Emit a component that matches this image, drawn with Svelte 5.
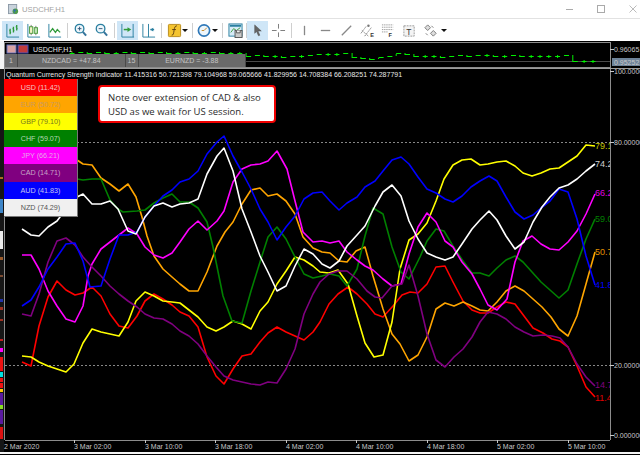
<script lang="ts">
	const stepX = 8.83;

	const series = [
		{
			name: 'USD',
			color: '#ff0000',
			points:
				'22,363 31,367 39,327 48,298 57,282 66,291 75,296 83,294 92,288 101,297 110,315 119,327 128,329 137,317 145,302 154,295 163,300 172,306 180,313 189,317 198,328 207,358 216,377 224,385 233,370 242,357 251,355 260,343 268,334 277,328 286,333 295,337 304,341 313,333 320,323 329,305 338,295 348,288 357,295 367,305 375,315 383,318 393,307 402,296 410,293 418,294 427,285 436,268 445,267 453,283 463,302 472,311 480,314 488,314 497,308 506,303 515,305 524,317 533,329 543,334 552,340 560,342 568,348 577,367 586,388 595,398'
		},
		{
			name: 'EUR',
			color: '#ffa500',
			points:
				'70,158 77,161 83,165 92,166 101,179 110,185 119,192 128,185 136,198 142,218 147,237 154,257 163,270 172,278 180,285 189,292 198,292 207,273 217,247 225,233 233,223 242,205 251,191 260,189 268,197 277,195 286,202 295,215 303,238 313,249 322,253 330,254 339,262 347,263 356,252 365,248 373,277 383,310 392,335 400,345 409,362 418,356 427,338 436,310 445,304 454,307 463,303 472,307 480,311 488,312 497,303 506,292 515,287 524,292 533,300 542,308 551,318 559,330 568,337 577,317 586,285 595,253'
		},
		{
			name: 'GBP',
			color: '#ffff00',
			points:
				'22,357 31,358 39,363 48,367 57,370 66,373 74,365 83,344 92,330 101,333 110,335 119,337 128,323 136,302 145,293 154,297 163,302 172,303 180,304 189,311 198,318 207,328 216,332 224,328 233,322 242,325 251,330 260,312 268,303 277,285 286,272 295,258 304,261 313,267 320,273 329,274 338,271 348,285 357,317 365,344 374,358 383,356 392,323 400,270 409,241 418,235 427,224 436,202 444,180 453,166 462,161 471,160 480,166 488,165 497,163 506,162 515,167 523,174 532,177 541,174 550,170 559,169 568,163 577,157 586,146 595,147'
		},
		{
			name: 'CHF',
			color: '#008000',
			points:
				'70,179 77,180 83,181 92,180 101,180 110,201 118,210 123,213 137,212 145,211 154,204 163,199 172,195 180,203 189,203 198,209 207,223 213,248 223,297 232,322 242,324 251,292 260,263 268,238 277,228 286,240 295,258 304,275 313,279 322,277 330,275 339,277 347,287 357,270 365,237 373,209 383,215 392,248 401,273 409,280 420,258 427,242 436,230 444,232 453,247 463,262 472,274 480,274 489,277 497,269 506,261 515,257 523,263 532,273 541,283 550,291 559,299 568,291 577,265 586,240 595,220'
		},
		{
			name: 'JPY',
			color: '#ff00ff',
			points:
				'22,256 31,256 39,270 48,292 57,307 66,320 75,323 83,307 88,277 92,265 101,250 110,243 119,236 128,229 137,235 145,248 154,256 163,259 172,254 180,243 189,230 198,222 207,231 217,222 224,212 233,183 242,170 251,166 260,165 268,162 277,152 287,170 295,202 303,233 313,243 322,242 330,244 339,242 347,253 357,261 365,267 373,271 383,280 392,287 401,285 409,255 418,228 427,214 436,223 445,242 453,248 462,263 472,275 480,290 488,306 497,311 507,300 515,263 523,242 532,237 541,245 550,250 559,251 568,243 577,232 586,215 595,195'
		},
		{
			name: 'CAD',
			color: '#800080',
			points:
				'22,315 31,317 39,295 48,263 57,242 66,239 75,246 83,258 92,268 101,277 110,287 119,295 128,302 137,308 145,315 154,319 163,320 172,325 180,332 189,337 198,345 207,357 216,368 224,377 233,381 242,383 251,385 260,386 268,383 277,384 286,370 295,350 304,315 313,295 320,283 329,275 338,272 347,272 357,280 367,292 375,298 382,299 392,287 402,285 409,266 418,297 427,335 436,361 445,368 454,358 463,350 472,338 480,323 488,313 497,315 506,320 515,328 524,333 533,337 543,336 552,337 560,339 568,348 577,365 586,378 595,387'
		},
		{
			name: 'AUD',
			color: '#0000ff',
			points:
				'22,307 31,301 39,288 48,270 57,258 66,245 75,244 83,262 90,288 101,287 110,260 119,236 128,236 137,233 145,218 154,207 163,197 172,191 180,183 189,180 198,172 207,155 217,143 224,137 233,157 242,173 251,190 260,210 268,223 277,241 286,228 295,217 304,200 313,194 322,193 330,202 339,211 347,204 357,198 365,188 375,182 383,172 392,161 401,158 409,165 418,178 427,190 436,194 445,200 453,203 462,197 471,188 480,182 489,177 497,182 506,198 515,213 524,220 533,216 541,209 550,202 559,190 568,193 577,220 586,257 595,286'
		},
		{
			name: 'NZD',
			color: '#ffffff',
			points:
				'22,230 31,236 39,237 48,228 57,222 66,210 77,198 83,195 92,205 101,205 110,202 118,210 128,232 136,235 145,218 154,207 163,204 172,208 180,205 189,204 198,200 207,175 217,157 224,149 233,172 242,210 251,233 260,257 268,273 277,292 286,287 295,267 304,250 313,255 322,265 330,269 339,262 347,247 357,236 365,227 375,207 383,193 392,186 401,197 409,222 418,240 427,254 436,258 445,261 453,258 462,245 472,230 480,221 489,212 497,221 506,237 515,250 524,243 533,223 542,208 550,198 559,189 568,186 577,180 586,172 595,165'
		}
	];

	const legend = [
		{ label: 'USD (11.42)', bg: '#ff0000', fg: '#f2c4c4' },
		{ label: 'EUR (50.72)', bg: '#ffa500', fg: '#c99a62' },
		{ label: 'GBP (79.10)', bg: '#ffff00', fg: '#77771f' },
		{ label: 'CHF (59.07)', bg: '#008000', fg: '#b5d6b5' },
		{ label: 'JPY (66.21)', bg: '#ff00ff', fg: '#e8a8e8' },
		{ label: 'CAD (14.71)', bg: '#800080', fg: '#c7a3c7' },
		{ label: 'AUD (41.83)', bg: '#0000ff', fg: '#c4c4f2' },
		{ label: 'NZD (74.29)', bg: '#f0f0f0', fg: '#555555' }
	];

	const endLabels = [
		{ text: '79.10', y: 150, color: '#c4c400' },
		{ text: '74.29', y: 168, color: '#cfcfcf' },
		{ text: '66.21', y: 197, color: '#e000e0' },
		{ text: '59.07', y: 223, color: '#008000' },
		{ text: '50.72', y: 256, color: '#e09000' },
		{ text: '41.83', y: 289, color: '#0000ff' },
		{ text: '14.71', y: 389, color: '#800080' },
		{ text: '11.42', y: 402, color: '#e00000' }
	];

	const dates = [
		{ text: '2 Mar 2020', x: 4 },
		{ text: '3 Mar 02:00', x: 74 },
		{ text: '3 Mar 10:00', x: 145 },
		{ text: '3 Mar 18:00', x: 215 },
		{ text: '4 Mar 02:00', x: 286 },
		{ text: '4 Mar 10:00', x: 356 },
		{ text: '4 Mar 18:00', x: 427 },
		{ text: '5 Mar 02:00', x: 497 },
		{ text: '5 Mar 10:00', x: 568 }
	];

	const scale = [
		{ text: '100.0000', y: 75 },
		{ text: '80.00000', y: 146 },
		{ text: '20.00000', y: 369 },
		{ text: '0.000000', y: 439 }
	];

	// leftovers of the window behind the chart, along the left edge
	const strip = [
		[178, 2, '#b06a20'], [200, 14, '#3f86c8'], [232, 18, '#ededed'], [258, 3, '#9a5a2a'],
		[276, 2, '#7a4a30'], [300, 3, '#2233aa'], [308, 3, '#a03020'], [320, 2, '#a03020'],
		[340, 2, '#c02020'], [349, 4, '#ff00ff'], [358, 14, '#ee1111'], [373, 5, '#00e0e0'],
		[379, 4, '#ee1111'], [384, 5, '#ee1111'], [390, 3, '#ffcc00'], [394, 12, '#5a1aa0'],
		[406, 4, '#88dd22'], [411, 14, '#5a1aa0'], [428, 12, '#dd1111']
	];

	// mini price chart in the top panel
	const miniY = [
		54, 53, 54, 53, 54, 54, 53, 54, 53, 54, 53, 54, 54, 53, 54, 54, 53, 54, 54, 54, 57, 56, 57, 57,
		58, 57, 57, 56, 55, 55, 55, 54, 58, 59, 60, 58, 57, 54, 55, 57, 57, 57, 58, 57, 56, 57, 56, 56,
		57, 57, 56, 57, 57, 57, 57, 57, 56, 62, 62, 62
	];
	let miniPath = '';
	miniY.forEach((y, i) => {
		const x = 72 + i * stepX;
		miniPath += `M${(x - 2.5).toFixed(1)} ${y + 0.5} H${(x + 2.5).toFixed(1)} `;
		if (i && miniY[i - 1] !== y) miniPath += `M${(x - 2.5).toFixed(1)} ${miniY[i - 1]} V${y + 1} `;
		else miniPath += `M${x.toFixed(1)} ${y - 1} V${y + 2} `;
	});
</script>

<div class="window">
	<header class="titlebar">
		<svg class="appicon" viewBox="0 0 12 12" width="11" height="11">
			<rect x="0.5" y="0.5" width="9" height="10" fill="#c9d3dc" stroke="#8a98a5" />
			<circle cx="8" cy="8" r="3" fill="#4f9a4a" />
			<path d="M6 7h3M7 5.5v4" stroke="#2f6fb0" />
		</svg>
		<span class="title">USDCHF,H1</span>
		<div class="winbtns">
			<span class="minimize"></span>
			<span class="maximize"></span>
			<svg viewBox="0 0 8 8" width="8" height="8"><path d="M0.5 0.5l7 7M7.5 0.5l-7 7" stroke="#bbb" /></svg>
		</div>
	</header>

	<nav class="toolbar">
		<button class="on">
			<svg viewBox="0 0 16 16"><path d="M2 1v14h13" stroke="#2a7fa0" fill="none" /><path d="M5.500 6v6M4.500 8h1M5.500 10h1M9 4v6M8 6h1M9 8h1M12.500 2v6M11.500 4h1M12.500 6h1" stroke="#2f9a3a" stroke-width="1.400" fill="none" /></svg>
		</button>
		<button>
			<svg viewBox="0 0 16 16"><path d="M2 1v14h13" stroke="#2a7fa0" fill="none" /><path d="M5.500 2v11M10.500 3v10" stroke="#777" /><rect x="3.800" y="4" width="3.400" height="7" fill="#f6f3c9" stroke="#4a9a3a" /><rect x="8.800" y="5" width="3.400" height="6" fill="#bfe3b8" stroke="#4a9a3a" /></svg>
		</button>
		<button>
			<svg viewBox="0 0 16 16"><path d="M2 1v14h13" stroke="#2a7fa0" fill="none" /><path d="M3 10l3-4 3 4 2-3 3 3" stroke="#2f9a3a" stroke-width="1.300" fill="none" /></svg>
		</button>
		<i class="sep"></i>
		<button>
			<svg viewBox="0 0 16 16"><circle cx="7" cy="6" r="4.600" fill="#eef6fb" stroke="#2a7fa0" stroke-width="1.400" /><path d="M5 6h4M7 4v4" stroke="#33557a" /><path d="M10.500 9.500l3.500 4" stroke="#36759c" stroke-width="2.200" /></svg>
		</button>
		<button>
			<svg viewBox="0 0 16 16"><circle cx="7" cy="6" r="4.600" fill="#eef6fb" stroke="#2a7fa0" stroke-width="1.400" /><path d="M5 6h4" stroke="#33557a" /><path d="M10.500 9.500l3.500 4" stroke="#36759c" stroke-width="2.200" /></svg>
		</button>
		<i class="sep"></i>
		<button class="on">
			<svg viewBox="0 0 16 16"><path d="M2 1v14h13M14 1v14" stroke="#2a7fa0" fill="none" /><path d="M4 7h5" stroke="#2f9a3a" stroke-width="1.600" /><path d="M8 4.500l4 2.500-4 2.500z" fill="#2f9a3a" /></svg>
		</button>
		<button>
			<svg viewBox="0 0 16 16"><path d="M2 1v14h13M8 1v14" stroke="#2a7fa0" fill="none" /><path d="M10 7h4" stroke="#2a7fa0" stroke-width="1.600" /><path d="M13 5v4l-3-2z" fill="#2a7fa0" /></svg>
		</button>
		<i class="sep"></i>
		<button class="wide">
			<svg viewBox="0 0 16 16"><rect x="1.500" y="1.500" width="13" height="13" rx="1" fill="#f4c430" stroke="#b98a1a" /><path d="M5 13c2 0 2-2 2.500-5S8.500 3 10.500 3M5.500 7h4" stroke="#5a3c10" fill="none" /></svg>
			<b class="caret"></b>
		</button>
		<i class="sep narrow"></i>
		<button class="wide">
			<svg viewBox="0 0 16 16"><circle cx="7.500" cy="8" r="6" fill="#eef6fb" stroke="#2f78b8" stroke-width="1.800" /><path d="M7.500 8l3-3M7.500 8H5" stroke="#c4882a" /></svg>
			<b class="caret"></b>
		</button>
		<i class="sep"></i>
		<button>
			<svg viewBox="0 0 16 16"><rect x="1" y="1" width="14" height="13" fill="#d7ecf8" stroke="#2a7fa0" /><path d="M2 2h12v2H2z" fill="#2a7fa0" /><path d="M3 10l3-4 3 2 4-3" stroke="#3f9a3a" fill="none" /><rect x="7.500" y="8" width="7.500" height="7.500" fill="#c9c9c9" stroke="#555" /><path d="M9 8v2.500h4V8" stroke="#555" fill="#eee" /></svg>
		</button>
		<i class="sep tight"></i>
		<button class="on">
			<svg viewBox="0 0 16 16"><path d="M5 2l7 6.500H8.500l2 4.500-1.500.6-2-4.500L5 11z" fill="#666" stroke="#444" stroke-width="0.500" /></svg>
		</button>
		<button>
			<svg viewBox="0 0 16 16"><path d="M8 1v5M8 10v5M1 8h5M10 8h5" stroke="#777" /></svg>
		</button>
		<i class="sep"></i>
		<button>
			<svg viewBox="0 0 16 16"><path d="M8 3v10" stroke="#888" stroke-width="1.400" /></svg>
		</button>
		<button>
			<svg viewBox="0 0 16 16"><path d="M3 8h10" stroke="#888" stroke-width="1.400" /></svg>
		</button>
		<button>
			<svg viewBox="0 0 16 16"><path d="M3 13L13 3" stroke="#888" stroke-width="1.400" /></svg>
		</button>
		<button>
			<svg viewBox="0 0 16 16"><path d="M1 11l6-8M5 14l7-9M2 8l7 6" stroke="#777" stroke-dasharray="1.500 1" /><circle cx="9" cy="3" r="1.300" fill="#777" /><text x="11" y="15" class="glyph">E</text></svg>
		</button>
		<button>
			<svg viewBox="0 0 16 16"><path d="M1 2h12M1 4.500h12M1 7h12M1 9.500h6" stroke="#999" stroke-dasharray="1.500 0.800" /><text x="8" y="15" class="glyph">F</text></svg>
		</button>
		<button>
			<svg viewBox="0 0 16 16"><rect x="2" y="3" width="11" height="11" fill="#f4f4f4" stroke="#999" stroke-dasharray="2 1" /><text x="4.500" y="12.500" class="glyph big">T</text></svg>
		</button>
		<button>
			<svg viewBox="0 0 16 16"><path d="M2 5l3-3 3 3-3 3zM8 11l3-3 3 3-3 3zM9 3l2 2M3 11l2 2" stroke="#777" fill="#ddd" /></svg>
		</button>
		<b class="caret lone"></b>
	</nav>

	<main class="terminal">
		<svg class="chart" viewBox="0 42 640 413" width="640" height="413">
			<defs>
				<clipPath id="plot"><rect x="5" y="70" width="605" height="371" /></clipPath>
			</defs>

			<rect x="0" y="42" width="4" height="28" fill="#f4f4f4" />
			<rect x="0" y="70" width="4" height="385" fill="#161616" />
			{#each strip as [y, h, fill]}
				<rect x="0" {y} width="3" height={h} {fill} />
			{/each}

			<!-- top panel -->
			<path d="M4 43.500H610M4.500 43V441M610.500 43V441M5 68.500H610M5 441.500H610" stroke="#8c8c8c" fill="none" />
			<path d="M5 69.500H640" stroke="#9c9c9c" />
			<rect x="7" y="46" width="9" height="8" fill="#d9a3a3" stroke="#6a76c0" />
			<rect x="18" y="46" width="10" height="8" fill="#c03a3a" stroke="#3a4fc0" />
			<text x="33" y="53" class="small white">USDCHF,H1</text>
			<path d="M5 62.500H610" stroke="#4a4a4a" />
			<path d={miniPath} stroke="#00f000" fill="none" />

			<path d="M610 50.500h4" stroke="#c8c8c8" />
			<text x="614" y="53" class="small">0.96065</text>
			<rect x="612" y="59" width="28" height="8" fill="#6d8298" />
			<text x="614" y="65.500" class="small">0.95252</text>

			<!-- indicator panel -->
			<text x="6" y="77.500" class="small white">Quantum Currency Strength Indicator 11.415316 50.721398 79.104968 59.065666 41.829956 14.708384 66.208251 74.287791</text>
			<path d="M5 143.500H610M5 366.500H610" stroke="#aaa" stroke-width="0.800" stroke-dasharray="2 2" />

			<g clip-path="url(#plot)">
				{#each series as line}
					<polyline points={line.points} stroke={line.color} class="curve" />
				{/each}
				{#each endLabels as end}
					<text x="595" y={end.y} fill={end.color} class="endlabel">{end.text}</text>
				{/each}
			</g>

			{#each scale as tick}
				<path d="M610 {tick.y - 2.500}h4" stroke="#c8c8c8" />
				<text x="614" y={tick.y} class="small">{tick.text}</text>
			{/each}

			{#each dates as d, i}
				{#if i}<path d="M{d.x + 0.500} 441v3" stroke="#c8c8c8" />{/if}
				<text x={d.x} y="450" class="small">{d.text}</text>
			{/each}

			<rect x="0" y="453" width="640" height="2" fill="#f4f4f4" />
		</svg>

		<div class="spread">
			<span class="cell num">1</span>
			<span class="cell pair">NZDCAD = +47.84</span>
			<span class="cell num">15</span>
			<span class="cell pair">EURNZD = -3.88</span>
		</div>

		<ul class="legend">
			{#each legend as row}
				<li style="background: {row.bg}; color: {row.fg}">{row.label}</li>
			{/each}
		</ul>

		<aside class="note">
			Note over extension of CAD &amp; also<br />
			USD as we wait for US session.
		</aside>
	</main>
</div>

<style>
	:global(body) {
		margin: 0;
		background: #fff;
	}

	.window {
		width: 640px;
		height: 455px;
		display: flex;
		flex-direction: column;
		font-family: 'Liberation Sans', Arial, sans-serif;
		overflow: hidden;
	}

	.titlebar {
		height: 19px;
		flex: none;
		display: flex;
		align-items: center;
		padding-left: 8px;
		box-sizing: border-box;
		border-bottom: 1px solid #e2e2e2;
	}

	.appicon {
		margin-right: 3px;
	}

	.title {
		color: #a3a3a3;
		font-size: 7.700px;
	}

	.winbtns {
		margin-left: auto;
		display: flex;
		align-items: center;
		gap: 24px;
		padding-right: 3px;
	}

	.minimize {
		width: 7px;
		border-top: 1px solid #aaa;
	}

	.maximize {
		width: 6px;
		height: 6px;
		border: 1px solid #aaa;
	}

	.toolbar {
		height: 22px;
		flex: none;
		display: flex;
		align-items: center;
		padding-left: 2px;
		box-sizing: border-box;
		background: #fff;
	}

	.toolbar button {
		width: 21px;
		height: 19px;
		flex: none;
		display: flex;
		align-items: center;
		justify-content: center;
		padding: 0;
		border: 0;
		background: none;
	}

	.toolbar button.on {
		background: #cfe6f7;
	}

	.toolbar button.wide {
		width: 26px;
		justify-content: flex-start;
		padding-left: 3px;
		box-sizing: border-box;
	}

	.toolbar svg {
		width: 15px;
		height: 15px;
		flex: none;
	}

	.glyph {
		font-size: 6px;
		font-weight: bold;
		fill: #333;
	}

	.glyph.big {
		font-size: 9px;
		font-weight: normal;
	}

	.sep {
		width: 1px;
		height: 15px;
		margin: 0 2px;
		background: #cfcfcf;
		flex: none;
	}

	.sep.narrow {
		margin: 0 1px 0 2px;
	}

	.sep.tight {
		margin: 0;
	}

	.caret {
		width: 0;
		height: 0;
		margin-left: 0;
		border: 3px solid transparent;
		border-top: 3px solid #111;
		border-bottom: 0;
	}

	.terminal {
		position: relative;
		flex: 1;
		background: #000;
		border-top: 1px solid #fff;
		margin-top: -1px;
	}

	.chart {
		display: block;
	}

	.small {
		font-size: 7px;
		fill: #c8c8c8;
	}

	.white {
		fill: #e8e8e8;
	}

	.curve {
		fill: none;
		stroke-width: 1.600;
		stroke-linejoin: round;
	}

	.endlabel {
		font-size: 9px;
	}

	.spread {
		position: absolute;
		left: 5px;
		top: 13px;
		width: 241px;
		height: 13px;
		display: flex;
		background: #6a6a6a;
	}

	.cell {
		color: #c4c4c4;
		font-size: 7px;
		line-height: 13px;
		text-align: center;
		box-sizing: border-box;
		border-right: 1px solid #4a4a4a;
	}

	.cell.num {
		width: 13px;
	}

	.cell.pair {
		flex: 1;
	}

	.legend {
		position: absolute;
		left: 4px;
		top: 38px;
		width: 73px;
		margin: 0;
		padding: 0;
		list-style: none;
		border-right: 1px solid #777;
		border-bottom: 1px solid #777;
	}

	.legend li {
		height: 17.100px;
		line-height: 17px;
		font-size: 7.200px;
		text-align: center;
	}

	.note {
		position: absolute;
		left: 98px;
		top: 44px;
		width: 178px;
		height: 38px;
		box-sizing: border-box;
		padding: 4px 0 0 8px;
		background: #fff;
		border: 2.500px solid #f00000;
		border-radius: 4px;
		color: #2c2c2c;
		font-family: 'Open Sans', 'Noto Sans', sans-serif;
		font-size: 9.550px;
		line-height: 13.500px;
		white-space: nowrap;
	}
</style>
